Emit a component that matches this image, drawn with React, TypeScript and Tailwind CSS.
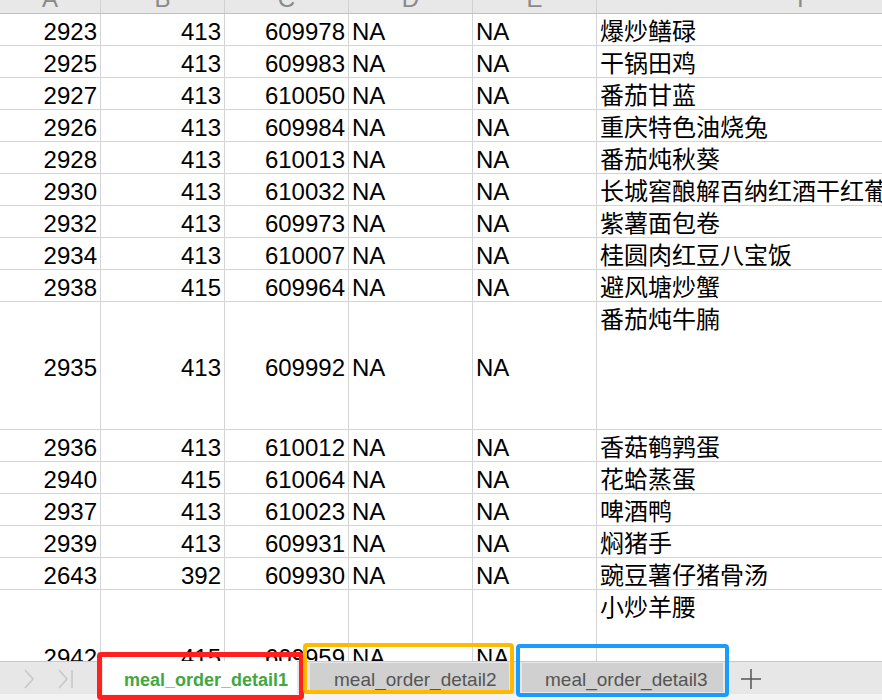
import React from 'react';

type Row = {
  id: string;
  b: string;
  c: string;
  name: string;
  tall?: number;
};

const rows: Row[] = [
  { id: '2923', b: '413', c: '609978', name: '爆炒鳝碌' },
  { id: '2925', b: '413', c: '609983', name: '干锅田鸡' },
  { id: '2927', b: '413', c: '610050', name: '番茄甘蓝' },
  { id: '2926', b: '413', c: '609984', name: '重庆特色油烧兔' },
  { id: '2928', b: '413', c: '610013', name: '番茄炖秋葵' },
  { id: '2930', b: '413', c: '610032', name: '长城窖酿解百纳红酒干红葡萄酒' },
  { id: '2932', b: '413', c: '609973', name: '紫薯面包卷' },
  { id: '2934', b: '413', c: '610007', name: '桂圆肉红豆八宝饭' },
  { id: '2938', b: '415', c: '609964', name: '避风塘炒蟹' },
  { id: '2935', b: '413', c: '609992', name: '番茄炖牛腩', tall: 128 },
  { id: '2936', b: '413', c: '610012', name: '香菇鹌鹑蛋' },
  { id: '2940', b: '415', c: '610064', name: '花蛤蒸蛋' },
  { id: '2937', b: '413', c: '610023', name: '啤酒鸭' },
  { id: '2939', b: '413', c: '609931', name: '焖猪手' },
  { id: '2643', b: '392', c: '609930', name: '豌豆薯仔猪骨汤' },
  { id: '2942', b: '415', c: '609959', name: '小炒羊腰', tall: 132 },
];

const cols = [
  { key: 'A', w: 'w-[101px]' },
  { key: 'B', w: 'w-[124px]' },
  { key: 'C', w: 'w-[124px]' },
  { key: 'D', w: 'w-[124px]' },
  { key: 'E', w: 'w-[124px]' },
  { key: 'F', w: 'w-[416px]' },
];

const font = { fontFamily: '"Liberation Sans", "Noto Sans CJK SC", sans-serif' };

function Cell({
  w,
  align,
  tall,
  top,
  children,
}: {
  w: string;
  align: 'left' | 'right';
  tall?: boolean;
  top?: boolean;
  children: React.ReactNode;
}) {
  const v = top ? 'items-start pt-[5px]' : tall ? 'items-center pt-1' : 'items-end';
  return (
    <div
      className={`${w} shrink-0 h-full flex ${v} border-r border-[#d4d4d4] whitespace-nowrap leading-[26px] ${
        align === 'right' ? 'justify-end pr-[3px]' : 'justify-start pl-[3px]'
      }`}
    >
      {children}
    </div>
  );
}

function SheetGrid() {
  return (
    <div className="flex-1 overflow-hidden bg-white text-[24px] text-black" style={font}>
      {/* column header strip */}
      <div className="flex h-[14px] bg-[#e8e8e8] border-b border-[#c0c0c0] overflow-hidden">
        {cols.map(col => (
          <div
            key={col.key}
            className={`${col.w} shrink-0 h-full flex justify-center border-r border-[#d0d0d0] text-[#8a8a8a]`}
          >
            <span className="block leading-[24px] -mt-[13px]">{col.key}</span>
          </div>
        ))}
      </div>

      {rows.map(r => {
        const tall = !!r.tall;
        return (
          <div
            key={r.id}
            className={`flex border-b border-[#d4d4d4] ${tall ? '' : 'h-[32px]'}`}
            style={tall ? { height: r.tall } : undefined}
          >
            <Cell w="w-[101px]" align="right" tall={tall}>{r.id}</Cell>
            <Cell w="w-[124px]" align="right" tall={tall}>{r.b}</Cell>
            <Cell w="w-[124px]" align="right" tall={tall}>{r.c}</Cell>
            <Cell w="w-[124px]" align="left" tall={tall}>NA</Cell>
            <Cell w="w-[124px]" align="left" tall={tall}>NA</Cell>
            <Cell w="w-[416px]" align="left" top={tall}>{r.name}</Cell>
          </div>
        );
      })}
    </div>
  );
}

function TabBar() {
  return (
    <div
      className="h-[39px] shrink-0 flex items-start bg-[#e7e7e7] border-t border-[#c8c8c8] relative"
      style={font}
    >
      <div className="absolute left-0 right-0 bottom-0 h-[6px] bg-[#f3f3f3]" />
      <div className="w-[103px] h-[32px] shrink-0 flex items-center relative">
        <svg className="absolute left-[22px] top-[6px]" width="14" height="22" viewBox="0 0 14 22">
          <polyline points="3,2 11,11 3,20" fill="none" stroke="#c8c8c8" strokeWidth="1.6" />
        </svg>
        <svg className="absolute left-[56px] top-[6px]" width="20" height="22" viewBox="0 0 20 22">
          <polyline points="3,2 11,11 3,20" fill="none" stroke="#c8c8c8" strokeWidth="1.6" />
          <line x1="16" y1="2" x2="16" y2="20" stroke="#c8c8c8" strokeWidth="1.6" />
        </svg>
      </div>
      <div className="w-[194px] h-[33px] -mt-px shrink-0 bg-white flex items-center pl-[21px] pt-[5px] text-[18px] font-bold text-[#3fa83f] relative">
        meal_order_detail1
      </div>
      <div className="ml-[13px] w-[199px] h-[29px] mt-px shrink-0 bg-[#d0d0d0] flex items-center pl-[24px] pt-[5px] text-[19px] text-[#555] relative">
        meal_order_detail2
      </div>
      <div className="ml-[13px] w-[201px] h-[29px] mt-px shrink-0 bg-[#d0d0d0] flex items-center pl-[23px] pt-[5px] text-[19px] text-[#555] relative">
        meal_order_detail3
      </div>
      <svg className="ml-[17px] mt-[6px] relative" width="22" height="22" viewBox="0 0 22 22">
        <line x1="11" y1="1" x2="11" y2="21" stroke="#555" strokeWidth="1.5" />
        <line x1="1" y1="11" x2="21" y2="11" stroke="#555" strokeWidth="1.5" />
      </svg>
    </div>
  );
}

export default function App() {
  return (
    <div className="w-[882px] h-[700px] overflow-hidden relative flex flex-col bg-white">
      <SheetGrid />
      <TabBar />

      {/* highlight frames around the sheet tabs */}
      <div className="absolute left-[97px] top-[652px] w-[207px] h-[48px] border-[5px] border-[#ff2020] rounded-[4px] pointer-events-none" />
      <div className="absolute left-[303px] top-[643px] w-[211px] h-[51px] border-4 border-[#ffb900] rounded-[4px] pointer-events-none" />
      <div className="absolute left-[516px] top-[644px] w-[213px] h-[53px] border-4 border-[#1a9cff] rounded-[4px] pointer-events-none" />
    </div>
  );
}
